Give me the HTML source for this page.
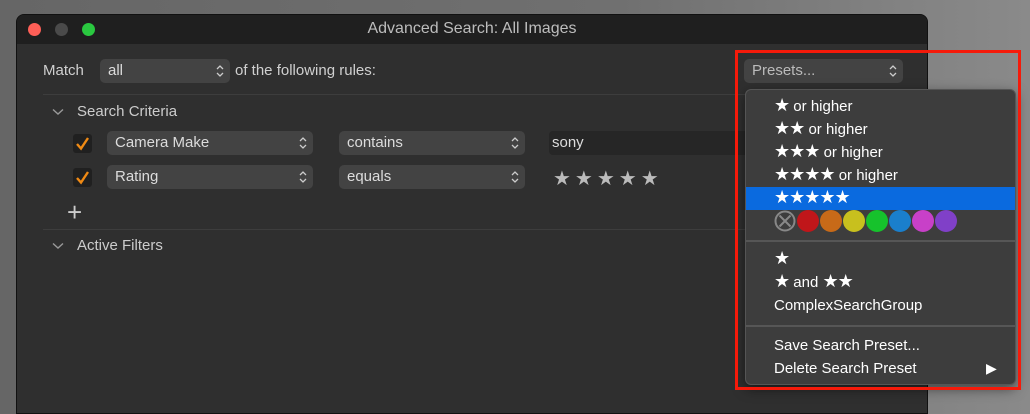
<!DOCTYPE html>
<html><head><style>
*{margin:0;padding:0;box-sizing:border-box}
body{width:1030px;height:400px;overflow:hidden;position:relative;background:linear-gradient(90deg,#666 0%,#707070 60%,#8a8a8a 100%);font-family:"Liberation Sans","DejaVu Sans",sans-serif;color:#dcdcdc;font-size:15px}
.a{position:absolute}
.win{left:16px;top:14px;width:912px;height:400px;background:#2f2f2f;border-radius:8px 8px 0 0;border:1px solid #111;overflow:hidden}
.tb{left:0;top:0;width:100%;height:29px;background:#1f1f1f}
.dot{width:13px;height:13px;border-radius:50%;top:8px}
.pop{background:#434343;border-radius:5px;height:24px}
.pop span{position:absolute;left:8px;top:3px}
.arr{position:absolute;right:5px;top:4px;width:10px;height:16px}
.line{height:1px;background:#3d3d3d}
.cb{width:19px;height:19px;background:#202020;border-radius:3px}
.menu{left:745px;top:89px;width:271px;height:296px;background:#3d3d3d;border:1px solid #555;border-radius:6px;box-shadow:0 4px 12px rgba(0,0,0,.5);color:#fff}
.it{position:absolute;left:28px;font-size:15px;white-space:nowrap}
.s{font-size:18px;letter-spacing:-1px;line-height:15px}
.sep{position:absolute;left:0;width:100%;height:2px;background:#565656}
.c{position:absolute;top:120px;width:22px;height:22px;border-radius:50%}
</style></head><body>
<svg width="0" height="0" style="position:absolute"><defs>
<symbol id="ud" viewBox="0 0 10 16"><path d="M2 6 L5 3 L8 6 M2 10 L5 13 L8 10" fill="none" stroke="#ccc" stroke-width="1.3"/></symbol>
<symbol id="chev" viewBox="0 0 12 8"><path d="M1 1.5 L6 6 L11 1.5" fill="none" stroke="#999" stroke-width="1.4"/></symbol>
<symbol id="ck" viewBox="0 0 19 19"><path d="M4 10 L8 14.5 L15 4" fill="none" stroke="#f08a14" stroke-width="2.4"/></symbol>
</defs></svg>
<div class="a win">
 <div class="a tb"></div>
 <div class="a dot" style="left:11px;background:#fe5f57"></div>
 <div class="a dot" style="left:38px;background:#4a4a4a"></div>
 <div class="a dot" style="left:65px;background:#2ac840"></div>
 <div class="a" style="left:0;width:100%;top:5px;text-align:center;font-size:16px;color:#bdbdbd">Advanced Search: All Images</div>
 <div class="a" style="left:26px;top:47px;color:#d0d0d0">Match</div>
 <div class="a pop" style="left:83px;top:44px;width:130px"><span>all</span><svg class="arr"><use href="#ud"/></svg></div>
 <div class="a" style="left:218px;top:47px;color:#d0d0d0">of the following rules:</div>
 <div class="a pop" style="left:727px;top:44px;width:159px"><span style="color:#bbb">Presets...</span><svg class="arr"><use href="#ud"/></svg></div>
 <div class="a line" style="left:26px;top:79px;width:870px"></div>
 <svg class="a" style="left:35px;top:93px" width="12" height="8"><use href="#chev"/></svg>
 <div class="a" style="left:60px;top:88px;color:#ccc">Search Criteria</div>
 <svg class="a cb" style="left:56px;top:119px"><use href="#ck"/></svg>
 <div class="a pop" style="left:90px;top:116px;width:206px"><span>Camera Make</span><svg class="arr"><use href="#ud"/></svg></div>
 <div class="a pop" style="left:322px;top:116px;width:186px"><span>contains</span><svg class="arr"><use href="#ud"/></svg></div>
 <div class="a" style="left:532px;top:116px;width:200px;height:24px;background:#262626;border-radius:4px"><span class="a" style="left:3px;top:3px">sony</span></div>
 <svg class="a cb" style="left:56px;top:153px"><use href="#ck"/></svg>
 <div class="a pop" style="left:90px;top:150px;width:206px"><span>Rating</span><svg class="arr"><use href="#ud"/></svg></div>
 <div class="a pop" style="left:322px;top:150px;width:186px"><span>equals</span><svg class="arr"><use href="#ud"/></svg></div>
 <div class="a" style="left:536px;top:151px;font-size:20px;letter-spacing:4px;color:#bbb">★★★★★</div>
 <div class="a" style="left:50px;top:182px;font-size:26px;color:#ccc">+</div>
 <div class="a line" style="left:26px;top:214px;width:870px"></div>
 <svg class="a" style="left:35px;top:227px" width="12" height="8"><use href="#chev"/></svg>
 <div class="a" style="left:60px;top:222px;color:#ccc">Active Filters</div>
</div>
<div class="a menu">
 <div class="it" style="top:8px"><span class="s">★</span> or higher</div>
 <div class="it" style="top:31px"><span class="s">★★</span> or higher</div>
 <div class="it" style="top:54px"><span class="s">★★★</span> or higher</div>
 <div class="it" style="top:77px"><span class="s">★★★★</span> or higher</div>
 <div class="a" style="left:0;top:97px;width:100%;height:23px;background:#0a6adf"></div>
 <div class="it" style="top:100px"><span class="s">★★★★★</span></div>
 <svg class="a" style="left:28px;top:120px" width="22" height="22"><circle cx="11" cy="11" r="9.5" fill="none" stroke="#888" stroke-width="2"/><path d="M5.5 5.5L16.5 16.5M16.5 5.5L5.5 16.5" stroke="#888" stroke-width="2"/></svg>
 <div class="c" style="left:51px;background:#c0161a"></div>
 <div class="c" style="left:74px;background:#c86a18"></div>
 <div class="c" style="left:97px;background:#c8c01e"></div>
 <div class="c" style="left:120px;background:#16c22c"></div>
 <div class="c" style="left:143px;background:#1a7fcc"></div>
 <div class="c" style="left:166px;background:#c840c8"></div>
 <div class="c" style="left:189px;background:#8040c8"></div>
 <div class="sep" style="top:150px"></div>
 <div class="it" style="top:161px"><span class="s">★</span></div>
 <div class="it" style="top:184px"><span class="s">★</span> and <span class="s">★★</span></div>
 <div class="it" style="top:207px">ComplexSearchGroup</div>
 <div class="sep" style="top:235px"></div>
 <div class="it" style="top:247px">Save Search Preset...</div>
 <div class="it" style="top:270px">Delete Search Preset</div>
 <div class="a" style="left:240px;top:270px;font-size:14px">▶</div>
</div>
<div class="a" style="left:735px;top:50px;width:286px;height:340px;border:3px solid #f51a0a"></div>
</body></html>
